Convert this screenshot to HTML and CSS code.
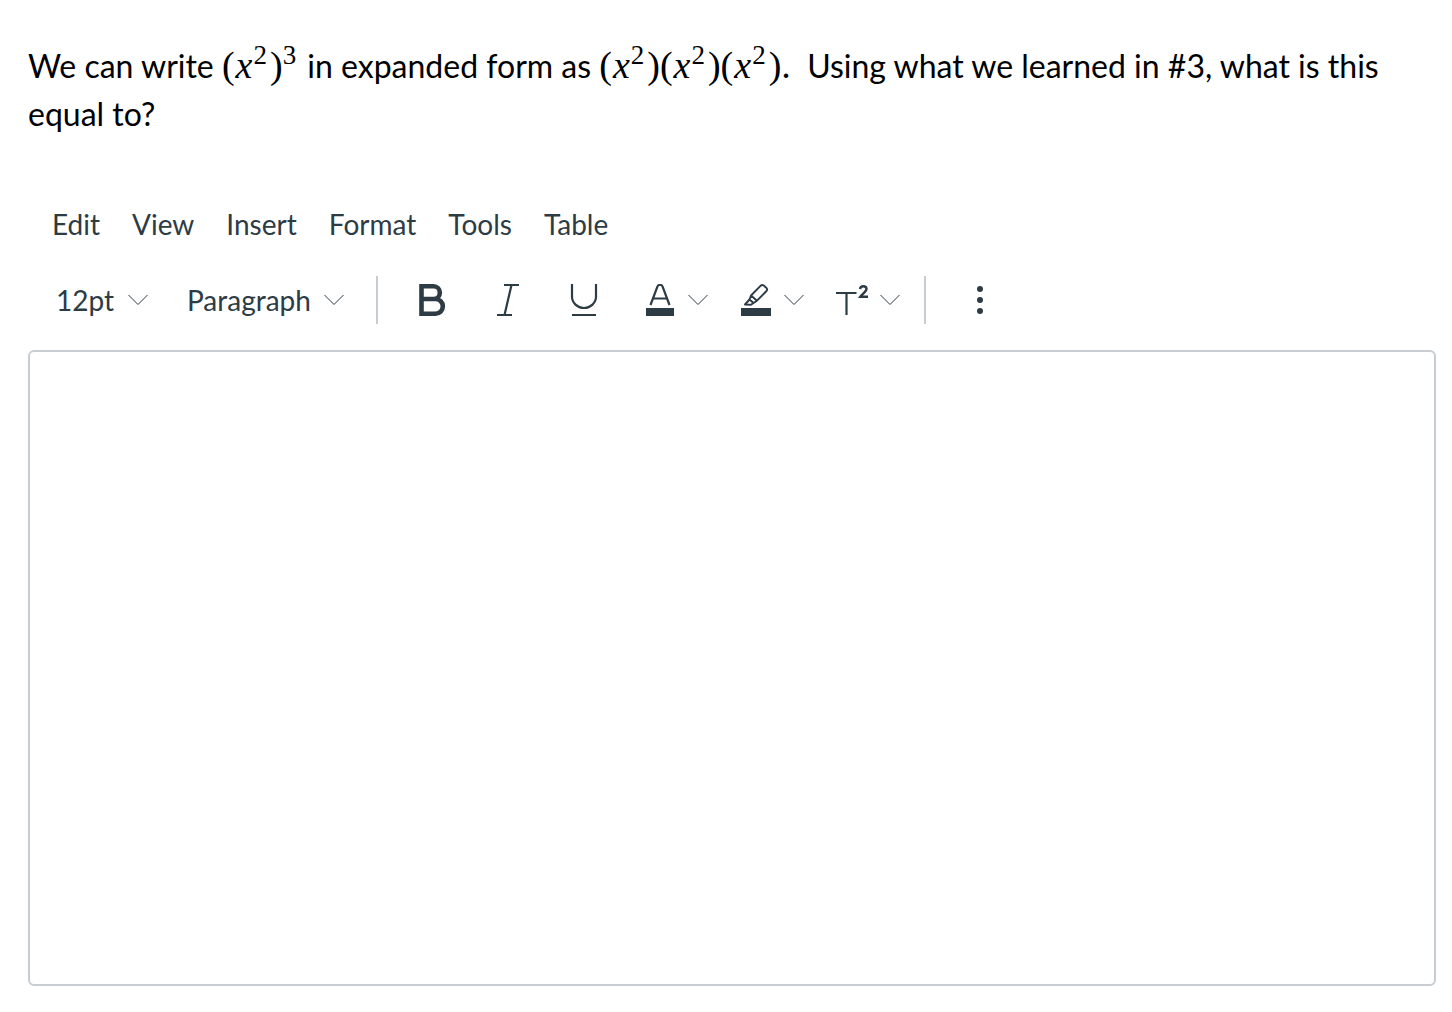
FILE: index.html
```html
<!DOCTYPE html>
<html lang="en">
<head>
<meta charset="utf-8">
<meta name="viewport" content="width=device-width, initial-scale=1">
<title>Question</title>
<link rel="stylesheet" href="styles.css">
</head>
<body>
<main class="question">
  <p class="prompt" id="prompt">We can write <span class="math">(<i>x</i><sup>2</sup>)<sup>3</sup></span> in expanded form as <span class="math">(<i>x</i><sup>2</sup>)(<i>x</i><sup>2</sup>)(<i>x</i><sup>2</sup>).</span>&nbsp; Using what we learned in #3, what is this equal to?</p>

  <div class="menubar" role="menubar">
    <button type="button" role="menuitem">Edit</button>
    <button type="button" role="menuitem">View</button>
    <button type="button" role="menuitem">Insert</button>
    <button type="button" role="menuitem">Format</button>
    <button type="button" role="menuitem">Tools</button>
    <button type="button" role="menuitem">Table</button>
  </div>

  <div class="toolbar" role="toolbar" aria-label="Formatting">
    <div class="picker">
      <select aria-label="Font size"><option>12pt</option></select>
      <svg class="chevron" viewBox="0 0 20 12"><path d="M0.5 1L10 10.5L19.500 1"/></svg>
    </div>
    <div class="picker">
      <select aria-label="Block style"><option>Paragraph</option></select>
      <svg class="chevron" viewBox="0 0 20 12"><path d="M0.5 1L10 10.5L19.500 1"/></svg>
    </div>
    <span class="divider"></span>
    <button type="button" class="tool" aria-label="Bold">
      <svg class="icon" viewBox="0 0 36 36"><path stroke-width="4.600" d="M7.500 4.300H19.500A6.300 6.300 0 0 1 19.500 17H7.500M19.500 17H21.500A7 7 0 0 1 21.500 31.700H7.500M7.500 2V34"/></svg>
    </button>
    <button type="button" class="tool" aria-label="Italic">
      <svg class="icon" viewBox="0 0 36 36"><path stroke-width="2.200" d="M14 3H29M7 33H22M21.500 3L14.500 33"/></svg>
    </button>
    <button type="button" class="tool" aria-label="Underline">
      <svg class="icon" viewBox="0 0 36 36"><path stroke-width="2.200" d="M6 2V14.500A12 11.500 0 0 0 30 14.500V2M6 33H30"/></svg>
    </button>
    <button type="button" class="tool split" aria-label="Text color">
      <svg class="icon" viewBox="0 0 36 36"><path stroke-width="2.200" d="M8.500 23L15.500 4.500Q16 3 17 3H19Q20 3 20.500 4.500L27.500 23M11.500 16.500H25"/><path class="solid" d="M4 26H32V34H4Z"/></svg>
      <svg class="chevron" viewBox="0 0 20 12"><path d="M0.5 1L10 10.5L19.500 1"/></svg>
    </button>
    <button type="button" class="tool split" aria-label="Highlight color">
      <svg class="icon" viewBox="0 0 36 36"><path stroke-width="1.900" stroke-linejoin="round" d="M13 13.500L22.500 3.800Q24 2.300 25.700 3.500L28.500 6Q29.800 7.500 28.500 9L19 18.700ZM13 13.500L11.500 17.500L15.500 21L19 18.700M11.500 17.500L7 22.500L13 22.700L15.500 21"/><path class="solid" d="M3 26H33V34H3Z"/></svg>
      <svg class="chevron" viewBox="0 0 20 12"><path d="M0.5 1L10 10.5L19.500 1"/></svg>
    </button>
    <button type="button" class="tool split" aria-label="Superscript">
      <svg class="icon" viewBox="0 0 36 36"><path stroke-width="2.200" d="M2 11H22.500M12.500 11V33"/><path stroke-width="2.400" d="M26 7Q26.500 4.300 29.300 4.300Q32.500 4.300 32.500 7C32.500 9.500 28.500 11.500 26.300 14.700H34"/></svg>
      <svg class="chevron" viewBox="0 0 20 12"><path d="M0.5 1L10 10.5L19.500 1"/></svg>
    </button>
    <span class="divider"></span>
    <button type="button" class="tool" aria-label="More">
      <svg class="icon" viewBox="0 0 36 36"><g class="solid"><circle cx="18" cy="7" r="3"/><circle cx="18" cy="18" r="3"/><circle cx="18" cy="29" r="3"/></g></svg>
    </button>
  </div>

  <textarea class="editor" aria-labelledby="prompt"></textarea>
</main>
</body>
</html>
```
FILE: styles.css
```css
* { box-sizing: border-box; }

body {
  margin: 0;
  background: #fff;
  color: #000;
  font-family: Lato, "Liberation Sans", sans-serif;
}

.question {
  display: flex;
  flex-direction: column;
  min-height: 100vh;
  padding: 42px 16px 26px 28px;
}

.prompt {
  margin: 0;
  font-size: 32px;
  line-height: 48px;
}

.math {
  font-family: "Liberation Serif", serif;
  font-size: 38px;
  line-height: 1;
  white-space: nowrap;
}

.math i { padding: 0 1px; }

.math sup {
  font-size: 27px;
  line-height: 0;
  vertical-align: 14px;
  padding-right: 3px;
}

button, select {
  border: 0;
  background: none;
  color: #2d3b45;
  font: 28px/34px Lato, "Liberation Sans", sans-serif;
}

.menubar {
  display: flex;
  flex-wrap: wrap;
  margin-top: 64px;
  padding-left: 8px;
}

.menubar button {
  height: 44px;
  padding: 0 16px;
}

.toolbar {
  display: flex;
  flex-wrap: wrap;
  align-items: center;
  margin-top: 24px;
  padding-left: 12px;
}

.picker {
  display: grid;
  align-items: center;
}

.picker + .picker { margin-left: 5px; }

.picker > * { grid-area: 1 / 1; }

.picker select {
  appearance: none;
  height: 60px;
  padding: 0 51px 0 16px;
}

.picker .chevron {
  justify-self: end;
  margin-right: 18px;
  pointer-events: none;
}

.divider {
  width: 2px;
  height: 48px;
  margin: 0 16px 0 14px;
  background: #c7cdd1;
}

.tool {
  display: flex;
  align-items: center;
  justify-content: center;
  width: 76px;
  height: 60px;
  padding: 0;
}

.split {
  justify-content: flex-start;
  gap: 10px;
  width: 96px;
  padding-left: 20px;
}

.icon, .chevron {
  fill: none;
  stroke: #2d3b45;
}

.icon {
  width: 36px;
  height: 36px;
}

.chevron {
  width: 20px;
  height: 12px;
}

.solid {
  fill: #2d3b45;
  stroke: none;
}

.editor {
  flex: 1;
  width: 100%;
  margin-top: 20px;
  padding: 16px;
  border: 2px solid #c7cdd1;
  border-radius: 6px;
  outline: 0;
  resize: none;
  font: 32px/48px Lato, "Liberation Sans", sans-serif;
}
```
